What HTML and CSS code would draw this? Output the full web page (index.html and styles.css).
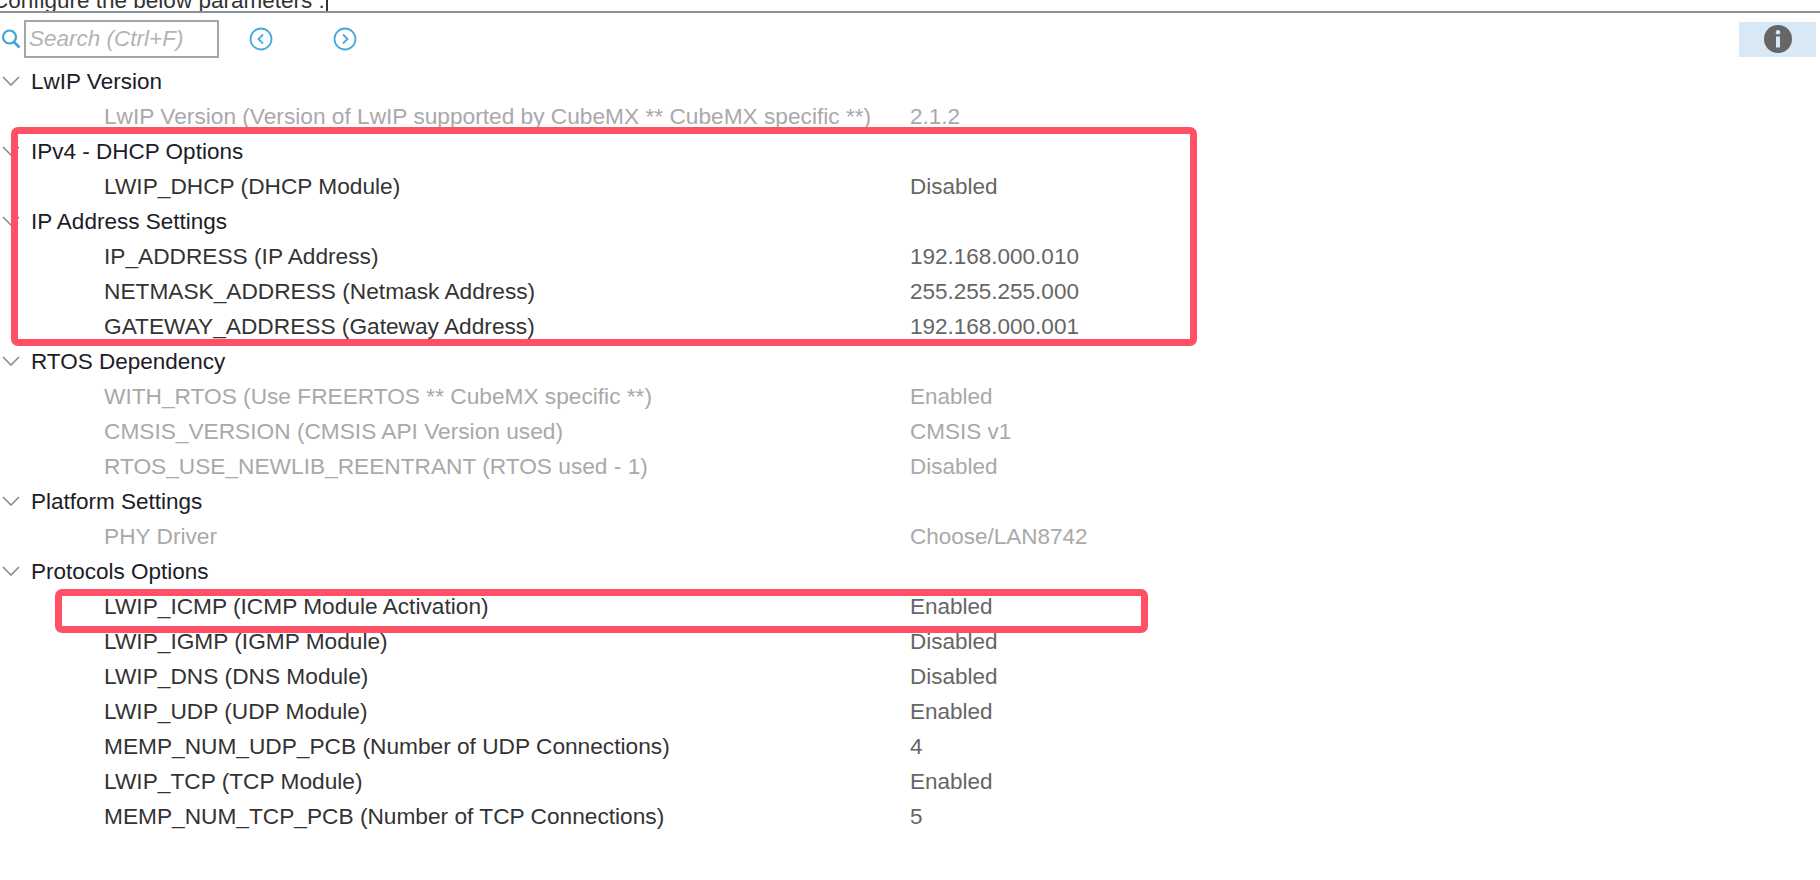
FILE: index.html
```html
<!DOCTYPE html>
<html lang="en">
<head>
    <meta charset="UTF-8" />
    <title>LwIP Parameter Settings</title>
    <link rel="stylesheet" href="styles.css">
</head>

<body>
    <!-- clipped heading strip -->
    <div class="heading">
        <span class="heading-text">Configure the below parameters :</span>
        <span class="caret"></span>
    </div>

    <!-- search bar -->
    <div class="toolbar">
        <svg class="lens" width="22" height="22" viewBox="0 0 22 22">
            <circle cx="9.5" cy="9" r="6.5" fill="none" stroke="#3fa3d8" stroke-width="2.2"/>
            <path d="M14 14l5.5 5.5" stroke="#3fa3d8" stroke-width="2.6" fill="none"/>
        </svg>
        <div class="search">Search (Ctrl+F)</div>
        <svg class="nav nav-prev" width="24" height="24" viewBox="0 0 24 24">
            <circle cx="12" cy="12" r="10.5" fill="none" stroke="#4aa9dd" stroke-width="1.8"/>
            <path d="M14 7.5L9.5 12l4.5 4.5" fill="none" stroke="#4aa9dd" stroke-width="1.8"/>
        </svg>
        <svg class="nav nav-next" width="24" height="24" viewBox="0 0 24 24">
            <circle cx="12" cy="12" r="10.5" fill="none" stroke="#4aa9dd" stroke-width="1.8"/>
            <path d="M10 7.5l4.5 4.5-4.5 4.5" fill="none" stroke="#4aa9dd" stroke-width="1.8"/>
        </svg>
        <div class="info-btn">
            <svg width="28" height="28" viewBox="0 0 28 28">
                <circle cx="14" cy="14" r="14" fill="#666"/>
                <circle cx="14" cy="7.2" r="2.2" fill="#d9e8f5"/>
                <rect x="12" y="11.5" width="4" height="11" fill="#d9e8f5"/>
            </svg>
        </div>
    </div>

    <!-- parameter tree -->
    <div class="tree">
        <div class="group"><svg class="chev" width="18" height="10" viewBox="0 0 18 10"><path d="M1 1l8 8 8-8"/></svg>LwIP Version</div>
        <div class="row off"><span class="name">LwIP Version (Version of LwIP supported by CubeMX ** CubeMX specific **)</span><span class="val">2.1.2</span></div>

        <div class="group"><svg class="chev" width="18" height="10" viewBox="0 0 18 10"><path d="M1 1l8 8 8-8"/></svg>IPv4 - DHCP Options</div>
        <div class="row"><span class="name">LWIP_DHCP (DHCP Module)</span><span class="val">Disabled</span></div>

        <div class="group"><svg class="chev" width="18" height="10" viewBox="0 0 18 10"><path d="M1 1l8 8 8-8"/></svg>IP Address Settings</div>
        <div class="row"><span class="name">IP_ADDRESS (IP Address)</span><span class="val">192.168.000.010</span></div>
        <div class="row"><span class="name">NETMASK_ADDRESS (Netmask Address)</span><span class="val">255.255.255.000</span></div>
        <div class="row"><span class="name">GATEWAY_ADDRESS (Gateway Address)</span><span class="val">192.168.000.001</span></div>

        <div class="group"><svg class="chev" width="18" height="10" viewBox="0 0 18 10"><path d="M1 1l8 8 8-8"/></svg>RTOS Dependency</div>
        <div class="row off"><span class="name">WITH_RTOS (Use FREERTOS ** CubeMX specific **)</span><span class="val">Enabled</span></div>
        <div class="row off"><span class="name">CMSIS_VERSION (CMSIS API Version used)</span><span class="val">CMSIS v1</span></div>
        <div class="row off"><span class="name">RTOS_USE_NEWLIB_REENTRANT (RTOS used - 1)</span><span class="val">Disabled</span></div>

        <div class="group"><svg class="chev" width="18" height="10" viewBox="0 0 18 10"><path d="M1 1l8 8 8-8"/></svg>Platform Settings</div>
        <div class="row off"><span class="name">PHY Driver</span><span class="val">Choose/LAN8742</span></div>

        <div class="group"><svg class="chev" width="18" height="10" viewBox="0 0 18 10"><path d="M1 1l8 8 8-8"/></svg>Protocols Options</div>
        <div class="row"><span class="name">LWIP_ICMP (ICMP Module Activation)</span><span class="val">Enabled</span></div>
        <div class="row"><span class="name">LWIP_IGMP (IGMP Module)</span><span class="val">Disabled</span></div>
        <div class="row"><span class="name">LWIP_DNS (DNS Module)</span><span class="val">Disabled</span></div>
        <div class="row"><span class="name">LWIP_UDP (UDP Module)</span><span class="val">Enabled</span></div>
        <div class="row"><span class="name">MEMP_NUM_UDP_PCB (Number of UDP Connections)</span><span class="val">4</span></div>
        <div class="row"><span class="name">LWIP_TCP (TCP Module)</span><span class="val">Enabled</span></div>
        <div class="row"><span class="name">MEMP_NUM_TCP_PCB (Number of TCP Connections)</span><span class="val">5</span></div>
    </div>

    <!-- red annotation boxes drawn over the screenshot -->
    <div class="mark mark-big"></div>
    <div class="mark mark-small"></div>
</body>
</html>
```

FILE: styles.css
```css
body {
    margin: 0;
    background: white;
    font-family: "Liberation Sans", Arial, sans-serif;
    font-size: 22.5px;
    color: #222;
    overflow: hidden;
}

/* --- Heading strip --- */
.heading {
    height: 11px;
    border-bottom: 2px solid #8b9095;
    display: flex;
    align-items: flex-end;
    overflow: hidden;
}

.heading-text {
    line-height: 22px;
    margin-bottom: -1px;
    margin-left: -8px;
    width: 334px;
    flex: none;
    white-space: nowrap;
    color: #333;
}

.caret {
    width: 2px;
    height: 11px;
    background: #333;
    flex: none;
}

/* --- Search bar --- */
.toolbar {
    height: 50px;
    padding-top: 1px;
    display: flex;
    align-items: center;
}

.lens {
    flex: none;
    margin-right: 2px;
}

.search {
    width: 188px;
    height: 34px;
    line-height: 34px;
    border: 2px solid #a2a7ab;
    padding-left: 3px;
    font-style: italic;
    color: #b4b4b4;
    flex: none;
}

.nav {
    flex: none;
}

.nav-prev {
    margin-left: 30px;
}

.nav-next {
    margin-left: 60px;
}

.info-btn {
    margin-left: auto;
    margin-right: 4px;
    width: 77px;
    height: 35px;
    background: #d9e8f5;
    display: flex;
    align-items: center;
    justify-content: center;
}

/* --- Tree --- */
.group {
    height: 35px;
    line-height: 35px;
    position: relative;
    padding-left: 31px;
    color: #1c1c28;
}

.chev {
    position: absolute;
    left: 2px;
    top: 12px;
}

.chev path {
    fill: none;
    stroke: #8a8a8a;
    stroke-width: 1.6;
}

.row {
    height: 35px;
    line-height: 35px;
    display: flex;
    color: #333;
}

.name {
    width: 806px;
    padding-left: 104px;
    flex: none;
    white-space: nowrap;
    font-size: 22.7px;
}

.val {
    color: #666;
    white-space: nowrap;
}

.row.off .name,
.row.off .val {
    color: #a9a9a9;
}

/* --- Annotation boxes --- */
.mark {
    position: absolute;
    box-sizing: border-box;
    border: 7px solid #ff5065;
    border-radius: 7px;
}

.mark-big {
    left: 11px;
    top: 127px;
    width: 1186px;
    height: 219px;
}

.mark-small {
    left: 55px;
    top: 589px;
    width: 1093px;
    height: 44px;
}
```
